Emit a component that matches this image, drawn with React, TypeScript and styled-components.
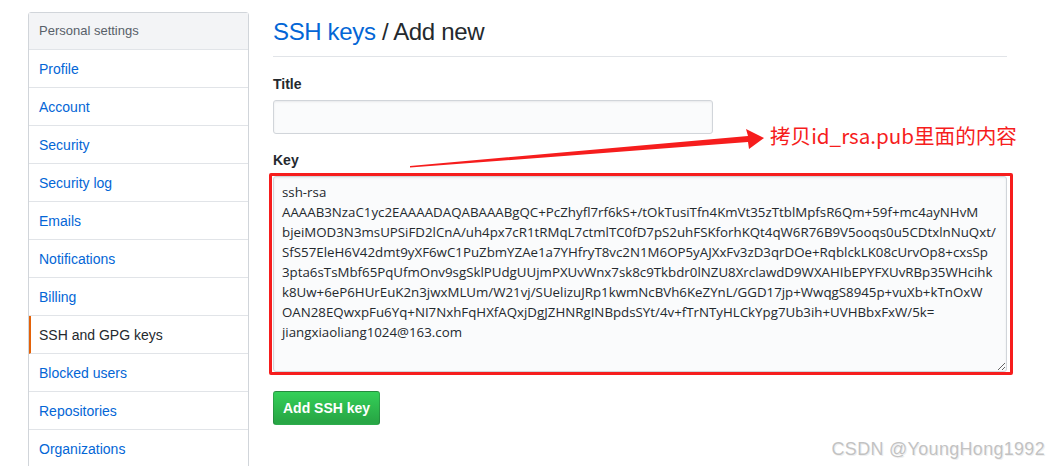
import React from "react";
import styled, { createGlobalStyle } from "styled-components";

const GlobalStyle = createGlobalStyle`
  html, body {
    margin: 0;
    background: #fff;
  }
  body {
    font-family: "Liberation Sans", Arial, sans-serif;
    font-size: 14px;
    color: #24292e;
  }
  * {
    box-sizing: border-box;
  }
`;

const Page = styled.div`
  position: relative;
  display: flex;
  align-items: flex-start;
  gap: 24px;
  padding: 12px 0 0 28px;
  height: 466px;
  overflow: hidden;
`;

const Menu = styled.nav`
  flex-shrink: 0;
  width: 221px;
  border: 1px solid #d1d5da;
  border-radius: 3px;
`;

const MenuHeading = styled.div`
  padding: 8px 10px;
  line-height: 20px;
  font-size: 13px;
  color: #586069;
  background: #f3f4f6;
  border-bottom: 1px solid #e1e4e8;
`;

const MenuItem = styled.a<{ $active?: boolean }>`
  display: block;
  padding: 9px 10px 8px ${(p) => (p.$active ? "8px" : "10px")};
  line-height: 20px;
  font-size: 14px;
  text-decoration: none;
  color: ${(p) => (p.$active ? "#24292e" : "#0366d6")};
  border-bottom: 1px solid #e1e4e8;
  border-left: ${(p) => (p.$active ? "2px solid #e36209" : "0")};
`;

const Main = styled.main`
  width: 734px;
`;

const Subhead = styled.div`
  padding: 5px 0 9px;
  border-bottom: 1px solid #e1e4e8;
  margin-bottom: 17px;
`;

const Heading = styled.h2`
  margin: 0;
  font-size: 24px;
  font-weight: 400;
  line-height: 30px;
  letter-spacing: -0.35px;
  color: #24292e;
`;

const HeadLink = styled.a`
  color: #0366d6;
  text-decoration: none;
`;

const FormGroup = styled.div<{ $gap: number }>`
  margin-bottom: ${(p) => p.$gap}px;
`;

const Label = styled.label`
  display: block;
  margin-bottom: 6px;
  line-height: 20px;
  font-weight: 700;
  font-size: 14px;
`;

const TextInput = styled.input`
  display: block;
  width: 440px;
  height: 34px;
  padding: 6px 8px;
  font: inherit;
  background: #fafbfc;
  border: 1px solid #d1d5da;
  border-radius: 3px;
  box-shadow: inset 0 1px 2px rgba(27, 31, 35, 0.075);
  outline: none;
`;

const KeyWrap = styled.div`
  position: relative;
`;

const KeyArea = styled.textarea`
  display: block;
  width: 734px;
  height: 196px;
  padding: 5px 8px;
  font-family: "Open Sans", "Liberation Sans", sans-serif;
  font-size: 13.3px;
  line-height: 20px;
  color: #24292e;
  background: #fafbfc;
  border: 1px solid #d1d5da;
  border-radius: 3px;
  box-shadow: inset 0 1px 2px rgba(27, 31, 35, 0.075);
  white-space: pre;
  overflow: hidden;
  resize: vertical;
  outline: none;
`;

const Highlight = styled.div`
  position: absolute;
  top: -3px;
  left: -4px;
  right: -6px;
  bottom: -3px;
  border: 3px solid #f61d1d;
  border-radius: 2px;
  pointer-events: none;
`;

const Button = styled.button`
  padding: 6px 9px;
  line-height: 20px;
  font-family: "Liberation Sans", Arial, sans-serif;
  font-size: 14px;
  font-weight: 700;
  color: #fff;
  background: linear-gradient(-180deg, #34d058 0%, #28a745 90%);
  border: 1px solid rgba(27, 31, 35, 0.2);
  border-radius: 3px;
  cursor: pointer;
`;

const Arrow = styled.svg`
  position: absolute;
  left: 0;
  top: 0;
  pointer-events: none;
`;

const Note = styled.div`
  position: absolute;
  left: 770px;
  top: 121px;
  font-family: "Noto Sans CJK SC", "Liberation Sans", sans-serif;
  font-size: 20.6px;
  line-height: 28px;
  color: #f61d1d;
`;

const Watermark = styled.div`
  position: absolute;
  right: 3px;
  top: 438px;
  font-family: "Liberation Sans", Arial, sans-serif;
  font-size: 18px;
  line-height: 22px;
  letter-spacing: 0.3px;
  color: #c2c2c2;
  text-shadow: 0 0 1px #fff, 1px 1px 0 #eee;
`;

const menu = [
  "Profile",
  "Account",
  "Security",
  "Security log",
  "Emails",
  "Notifications",
  "Billing",
  "SSH and GPG keys",
  "Blocked users",
  "Repositories",
  "Organizations",
];

const sshKey = [
  "ssh-rsa",
  "AAAAB3NzaC1yc2EAAAADAQABAAABgQC+PcZhyfl7rf6kS+/tOkTusiTfn4KmVt35zTtblMpfsR6Qm+59f+mc4ayNHvM",
  "bjeiMOD3N3msUPSiFD2lCnA/uh4px7cR1tRMqL7ctmlTC0fD7pS2uhFSKforhKQt4qW6R76B9V5ooqs0u5CDtxlnNuQxt/",
  "SfS57EleH6V42dmt9yXF6wC1PuZbmYZAe1a7YHfryT8vc2N1M6OP5yAJXxFv3zD3qrDOe+RqblckLK08cUrvOp8+cxsSp",
  "3pta6sTsMbf65PqUfmOnv9sgSklPUdgUUjmPXUvWnx7sk8c9Tkbdr0lNZU8XrclawdD9WXAHIbEPYFXUvRBp35WHcihk",
  "k8Uw+6eP6HUrEuK2n3jwxMLUm/W21vj/SUelizuJRp1kwmNcBVh6KeZYnL/GGD17jp+WwqgS8945p+vuXb+kTnOxW",
  "OAN28EQwxpFu6Yq+NI7NxhFqHXfAQxjDgJZHNRgINBpdsSYt/4v+fTrNTyHLCkYpg7Ub3ih+UVHBbxFxW/5k=",
  "jiangxiaoliang1024@163.com",
].join("\n");

export default function App() {
  return (
    <>
      <GlobalStyle />
      <Page>
        <Menu>
          <MenuHeading>Personal settings</MenuHeading>
          {menu.map((item) => (
            <MenuItem key={item} href="#" $active={item === "SSH and GPG keys"}>
              {item}
            </MenuItem>
          ))}
        </Menu>
        <Main>
          <Subhead>
            <Heading>
              <HeadLink href="#">SSH keys</HeadLink> / Add new
            </Heading>
          </Subhead>
          <FormGroup $gap={16}>
            <Label>Title</Label>
            <TextInput type="text" />
          </FormGroup>
          <FormGroup $gap={19}>
            <Label>Key</Label>
            <KeyWrap>
              <KeyArea wrap="off" defaultValue={sshKey} spellCheck={false} />
              <Highlight />
            </KeyWrap>
          </FormGroup>
          <Button type="button">Add SSH key</Button>
        </Main>

        <Arrow width="1048" height="466" viewBox="0 0 1048 466">
          <polygon
            fill="#f61d1d"
            points="410,166 748,136 746,129 764,138 749,149 748,142 410,167.6"
          />
        </Arrow>
        <Note>拷贝id_rsa.pub里面的内容</Note>
        <Watermark>CSDN @YoungHong1992</Watermark>
      </Page>
    </>
  );
}
